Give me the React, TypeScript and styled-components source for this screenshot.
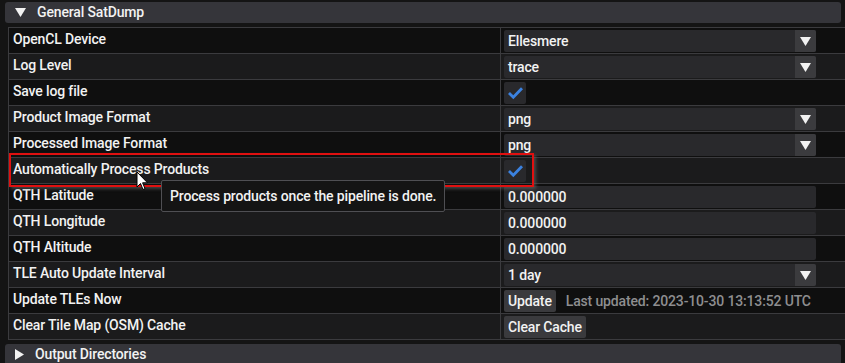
import React from "react";
import styled, { createGlobalStyle } from "styled-components";

const Global = createGlobalStyle`
  html, body { margin: 0; padding: 0; background: #141414; }
  body { font-family: Roboto, "Noto Sans", "Liberation Sans", sans-serif; font-size: 14px; color: #f2f2f2; letter-spacing: -0.15px; }
  * { box-sizing: border-box; }
`;

const Page = styled.div`
  position: relative;
  width: 845px;
  height: 363px;
  overflow: hidden;
  padding-top: 2px;
  background: #141414;
`;

const Header = styled.div`
  display: flex;
  align-items: center;
  gap: 11px;
  height: 21px;
  margin: 0 4px 0 5px;
  padding-left: 10px;
  background: #35353a;
  border-radius: 3px;
  font-weight: 500;
  line-height: 17px;
`;

const Table = styled.div`
  margin: 4px 0 4px 8px;
  border-top: 1px solid #3b3b3e;
  border-left: 1px solid #3b3b3e;
`;

const Row = styled.div<{ $alt: boolean }>`
  display: grid;
  grid-template-columns: 492px 1fr;
  height: 26px;
  border-bottom: 1px solid #3b3b3e;
  background: ${(p) => (p.$alt ? "#1b1b1c" : "#0f0f0f")};
`;

const Label = styled.div`
  border-right: 1px solid #3b3b3e;
  padding: 2px 0 0 4px;
  line-height: 18px;
  font-weight: 500;
  white-space: nowrap;
`;

const Value = styled.div`
  display: flex;
  align-items: flex-start;
  padding: 2px 0 0 3px;
`;

const Combo = styled.div`
  display: flex;
  width: 312px;
  height: 22px;
  background: #29292c;
  border-radius: 2px;
  overflow: hidden;
`;

const ComboText = styled.div`
  flex: 1;
  padding: 0 4px;
  line-height: 22px;
  font-weight: 500;
`;

const ComboArrow = styled.div`
  width: 21px;
  height: 22px;
  background: #3b3b3e;
  display: flex;
  align-items: center;
  justify-content: center;
`;

const Input = styled.div`
  width: 312px;
  height: 22px;
  background: #29292c;
  border-radius: 2px;
  padding: 0 4px;
  line-height: 22px;
  font-weight: 500;
`;

const CheckBox = styled.div`
  width: 22px;
  height: 22px;
  background: #29292c;
  border-radius: 2px;
  display: flex;
  align-items: center;
  justify-content: center;
`;

const Button = styled.div`
  height: 22px;
  padding: 0 4px;
  background: #3a3a3d;
  border-radius: 2px;
  line-height: 22px;
  font-weight: 500;
`;

const Muted = styled.div`
  margin-left: 10px;
  line-height: 22px;
  color: #8e8e90;
  font-weight: 500;
`;

const Highlight = styled.div`
  position: absolute;
  left: 9px;
  top: 153px;
  width: 525px;
  height: 34px;
  border: 2px solid #e01010;
  box-shadow: 2px 2px 3px rgba(110, 110, 110, 0.55);
  pointer-events: none;
`;

const Tooltip = styled.div`
  position: absolute;
  left: 161px;
  top: 180px;
  width: 284px;
  height: 32px;
  background: #141414;
  border: 1px solid #4f4f53;
  border-radius: 2px;
  padding: 7px 0 0 8px;
  line-height: 17px;
  font-weight: 500;
  white-space: nowrap;
`;

const Cursor = styled.svg`
  position: absolute;
  left: 136px;
  top: 171px;
`;

const DownTri = () => (
  <svg width="11" height="9" viewBox="0 0 11 9">
    <path d="M0 0 H11 L5.5 9 Z" fill="#f2f2f2" />
  </svg>
);

const RightTri = () => (
  <svg width="9" height="11" viewBox="0 0 9 11">
    <path d="M0 0 V11 L9 5.5 Z" fill="#f2f2f2" />
  </svg>
);

const Check = () => (
  <svg width="17" height="14" viewBox="0 0 17 14">
    <path d="M2 7 L6.3 11.2 L15 2.3" fill="none" stroke="#3b82e0" strokeWidth="2.8" />
  </svg>
);

type Cell =
  | { kind: "combo"; text: string }
  | { kind: "check" }
  | { kind: "input"; text: string }
  | { kind: "update" }
  | { kind: "clear" };

const rows: { label: string; cell: Cell }[] = [
  { label: "OpenCL Device", cell: { kind: "combo", text: "Ellesmere" } },
  { label: "Log Level", cell: { kind: "combo", text: "trace" } },
  { label: "Save log file", cell: { kind: "check" } },
  { label: "Product Image Format", cell: { kind: "combo", text: "png" } },
  { label: "Processed Image Format", cell: { kind: "combo", text: "png" } },
  { label: "Automatically Process Products", cell: { kind: "check" } },
  { label: "QTH Latitude", cell: { kind: "input", text: "0.000000" } },
  { label: "QTH Longitude", cell: { kind: "input", text: "0.000000" } },
  { label: "QTH Altitude", cell: { kind: "input", text: "0.000000" } },
  { label: "TLE Auto Update Interval", cell: { kind: "combo", text: "1 day" } },
  { label: "Update TLEs Now", cell: { kind: "update" } },
  { label: "Clear Tile Map (OSM) Cache", cell: { kind: "clear" } },
];

const renderCell = (c: Cell) => {
  switch (c.kind) {
    case "combo":
      return (
        <Combo>
          <ComboText>{c.text}</ComboText>
          <ComboArrow>
            <DownTri />
          </ComboArrow>
        </Combo>
      );
    case "check":
      return (
        <CheckBox>
          <Check />
        </CheckBox>
      );
    case "input":
      return <Input>{c.text}</Input>;
    case "update":
      return (
        <>
          <Button>Update</Button>
          <Muted>Last updated: 2023-10-30 13:13:52 UTC</Muted>
        </>
      );
    case "clear":
      return <Button>Clear Cache</Button>;
  }
};

export default function App() {
  return (
    <Page>
      <Global />
      <Header>
        <DownTri />
        <span>General SatDump</span>
      </Header>
      <Table>
        {rows.map((r, i) => (
          <Row key={r.label} $alt={i % 2 === 1}>
            <Label>{r.label}</Label>
            <Value>{renderCell(r.cell)}</Value>
          </Row>
        ))}
      </Table>
      <Header>
        <RightTri />
        <span>Output Directories</span>
      </Header>
      <Highlight />
      <Tooltip>Process products once the pipeline is done.</Tooltip>
      <Cursor width="13" height="21" viewBox="0 0 13 21">
        <path d="M1 1 L1 16 L4.5 12.5 L7 18.5 L9 17.6 L6.6 11.8 L11.5 11.8 Z" fill="#fff" stroke="#000" strokeWidth="1" strokeLinejoin="round" />
      </Cursor>
    </Page>
  );
}
